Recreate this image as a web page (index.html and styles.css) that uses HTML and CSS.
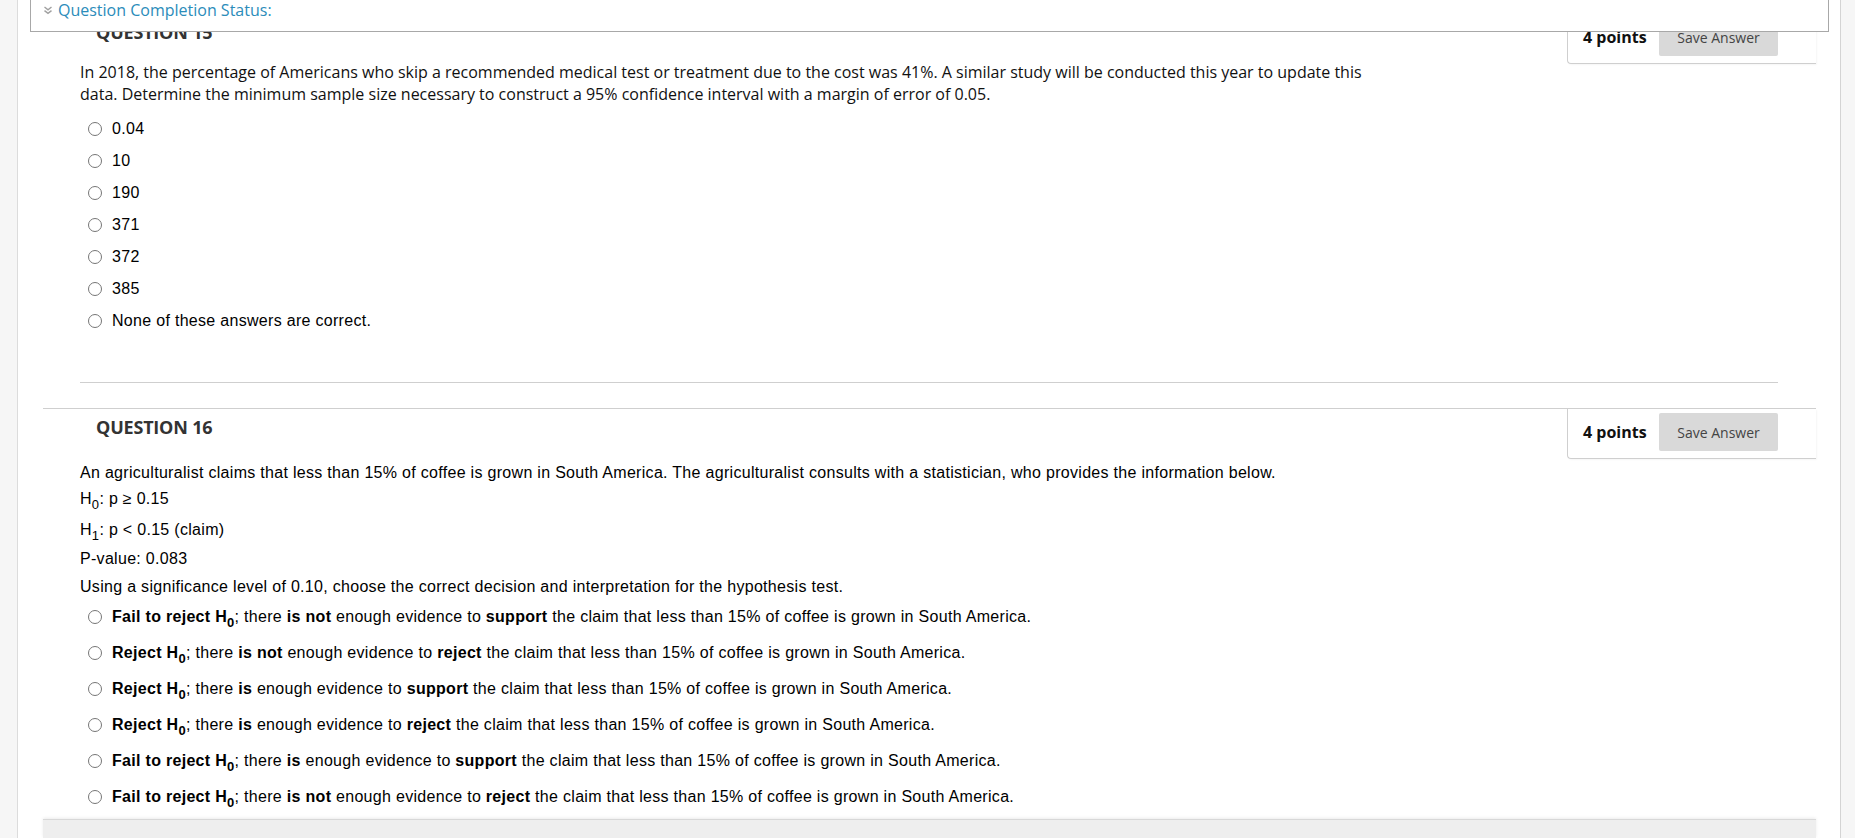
FILE: index.html
```html
<!DOCTYPE html>
<html lang="en">
<head>
<meta charset="utf-8">
<title>Question Completion</title>
<link rel="stylesheet" href="styles.css">
</head>
<body>
<div class="page">
  <div class="rail-left"></div>
  <main class="main">
    <section class="question q15">
      <div class="q-head">
        <h3 class="q-title">QUESTION 15</h3>
        <div class="q-points"><span class="pts">4 points</span><button class="save">Save Answer</button></div>
      </div>
      <p class="q-text-cal">In 2018, the percentage of Americans who skip a recommended medical test or treatment due to the cost was 41%. A similar study will be conducted this year to update this<br>data. Determine the minimum sample size necessary to construct a 95% confidence interval with a margin of error of 0.05.</p>
      <ul class="options opts15">
        <li><span class="radio"></span><span>0.04</span></li>
        <li><span class="radio"></span><span>10</span></li>
        <li><span class="radio"></span><span>190</span></li>
        <li><span class="radio"></span><span>371</span></li>
        <li><span class="radio"></span><span>372</span></li>
        <li><span class="radio"></span><span>385</span></li>
        <li><span class="radio"></span><span>None of these answers are correct.</span></li>
      </ul>
      <hr class="q-sep">
    </section>

    <section class="question q16">
      <div class="q-head">
        <h3 class="q-title">QUESTION 16</h3>
        <div class="q-points"><span class="pts">4 points</span><button class="save">Save Answer</button></div>
      </div>
      <div class="q-body">
        <p class="ln ln-intro">An agriculturalist claims that less than 15% of coffee is grown in South America. The agriculturalist consults with a statistician, who provides the information below.</p>
        <p class="ln ln-h0">H<sub>0</sub>: p ≥ 0.15</p>
        <p class="ln ln-h1">H<sub>1</sub>: p &lt; 0.15 (claim)</p>
        <p class="ln ln-p">P-value: 0.083</p>
        <p class="ln ln-use">Using a significance level of 0.10, choose the correct decision and interpretation for the hypothesis test.</p>
      </div>
      <ul class="options opts16">
        <li><span class="radio"></span><span><b>Fail to reject H<sub>0</sub></b>; there <b>is not</b> enough evidence to <b>support</b> the claim that less than 15% of coffee is grown in South America.</span></li>
        <li><span class="radio"></span><span><b>Reject H<sub>0</sub></b>; there <b>is not</b> enough evidence to <b>reject</b> the claim that less than 15% of coffee is grown in South America.</span></li>
        <li><span class="radio"></span><span><b>Reject H<sub>0</sub></b>; there <b>is</b> enough evidence to <b>support</b> the claim that less than 15% of coffee is grown in South America.</span></li>
        <li><span class="radio"></span><span><b>Reject H<sub>0</sub></b>; there <b>is</b> enough evidence to <b>reject</b> the claim that less than 15% of coffee is grown in South America.</span></li>
        <li><span class="radio"></span><span><b>Fail to reject H<sub>0</sub></b>; there <b>is</b> enough evidence to <b>support</b> the claim that less than 15% of coffee is grown in South America.</span></li>
        <li><span class="radio"></span><span><b>Fail to reject H<sub>0</sub></b>; there <b>is not</b> enough evidence to <b>reject</b> the claim that less than 15% of coffee is grown in South America.</span></li>
      </ul>
    </section>
    <div class="footer-box"></div>
  </main>
  <div class="rail-right"></div>
</div>

<div class="status-bar">
  <svg class="chev" width="10" height="9" viewBox="0 0 10 9" aria-hidden="true">
    <path d="M1.5 1 L5 3.8 L8.5 1" fill="none" stroke="#a0a0a0" stroke-width="1.4"/>
    <path d="M1.5 4.6 L5 7.4 L8.5 4.6" fill="none" stroke="#a0a0a0" stroke-width="1.4"/>
  </svg>
  <span class="status-text">Question Completion Status:</span>
</div>
</body>
</html>
```

FILE: styles.css
```css
* { box-sizing: border-box; }

html, body {
  margin: 0;
  padding: 0;
  height: 838px;
  overflow: hidden;
  background: #fff;
  font-family: "Liberation Sans", Arial, sans-serif;
  color: #000;
}

.page {
  display: flex;
  height: 838px;
}

.rail-left {
  width: 18px;
  flex: none;
  background: #f6f6f6;
  border-right: 1px solid #dcdcdc;
}

.rail-right {
  width: 15px;
  flex: none;
  background: #f6f6f6;
  border-left: 1px solid #d4d4d4;
}

.main {
  flex: 1;
  padding-top: 13px;
  display: flex;
  flex-direction: column;
}

.question {
  margin: 0 24px 0 25px;
  padding: 0 38px 0 37px;
  border-top: 1px solid #cfcfcf;
}

.q-head {
  display: flex;
  justify-content: space-between;
  align-items: flex-start;
  height: 31px;
  margin-right: -38px;
}

.q-title {
  margin: 0;
  padding: 6px 0 0 16px;
  font-family: "Open Sans", sans-serif;
  font-weight: 700;
  font-size: 18px;
  line-height: 24px;
  color: #333;
  letter-spacing: -0.2px;
}

.q-points {
  display: flex;
  align-items: center;
  gap: 12px;
  padding: 4px 38px 7px 15px;
  background: #fff;
  border-left: 1px solid #cfcfcf;
  border-bottom: 1px solid #cfcfcf;
  border-bottom-left-radius: 4px;
  box-shadow: 1px 1px 2px rgba(0,0,0,0.04);
  position: relative;
  z-index: 1;
}

.pts {
  font-family: "Open Sans", sans-serif;
  font-weight: 700;
  font-size: 16px;
  color: #111;
  width: 64px;
  white-space: nowrap;
}

.save {
  width: 119px;
  height: 38px;
  border: 0;
  border-radius: 2px;
  background: #d9d9d9;
  font-family: "Open Sans", sans-serif;
  font-size: 14px;
  color: #444;
  padding: 0;
}

.q-text-cal {
  margin: 16px 0 0 0;
  font-family: "Open Sans", sans-serif;
  font-size: 16px;
  line-height: 22px;
  color: #111;
  white-space: nowrap;
}

.options {
  list-style: none;
  margin: 0;
  padding: 0 0 0 8px;
  font-size: 16px;
  letter-spacing: 0.3px;
}

.options li {
  display: flex;
  align-items: center;
  gap: 10px;
  line-height: 20px;
  height: 20px;
}

.opts15 { margin-top: 14px; }
.opts15 li + li { margin-top: 12px; }

.opts16 { margin-top: 10px; }
.opts16 li + li { margin-top: 16px; }

.radio {
  width: 14px;
  height: 14px;
  flex: none;
  border: 1px solid #767676;
  border-radius: 50%;
  background: #fff;
}

.q-sep {
  margin: 51px 0 25px 0;
  border: 0;
  border-top: 1px solid #cfcfcf;
  height: 0;
}

.q-body { margin-top: 23px; }

.ln {
  margin: 0;
  font-size: 16px;
  line-height: 20px;
  letter-spacing: 0.3px;
  white-space: nowrap;
}

.ln-h0 { margin-top: 6px; }
.ln-h1 { margin-top: 11px; }
.ln-p { margin-top: 9px; }
.ln-use { margin-top: 8px; }

sub {
  font-size: 13px;
  line-height: 0;
  vertical-align: -5px;
}

.footer-box {
  margin: 12px 24px 0 25px;
  flex: 1;
  background: #eeeeee;
  border-top: 1px solid #d8d8d8;
  box-shadow: 0 -1px 3px rgba(0,0,0,0.08);
}

.status-bar {
  position: fixed;
  top: -10px;
  left: 30px;
  width: 1799px;
  height: 42px;
  padding: 9px 0 0 12px;
  display: flex;
  align-items: flex-start;
  gap: 5px;
  background: #fff;
  border: 1px solid #a8a8a8;
  z-index: 5;
}

.chev {
  flex: none;
  margin-top: 6px;
}

.status-text {
  font-family: "Open Sans", sans-serif;
  font-size: 16px;
  color: #2b8cba;
  line-height: 20px;
}
```
